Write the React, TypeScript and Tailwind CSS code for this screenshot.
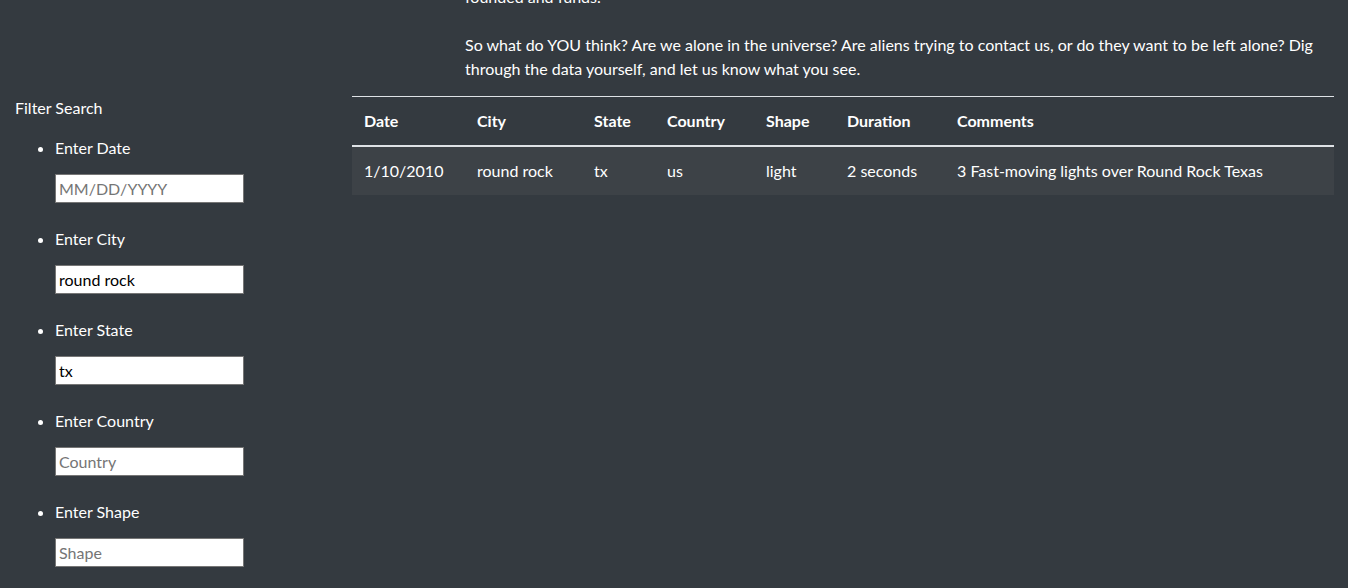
const filters = [
  { label: "Enter Date", placeholder: "MM/DD/YYYY", value: "" },
  { label: "Enter City", placeholder: "City", value: "round rock" },
  { label: "Enter State", placeholder: "State", value: "tx" },
  { label: "Enter Country", placeholder: "Country", value: "" },
  { label: "Enter Shape", placeholder: "Shape", value: "" },
];

const columns = [
  { name: "Date", width: "w-[113px]" },
  { name: "City", width: "w-[117px]" },
  { name: "State", width: "w-[73px]" },
  { name: "Country", width: "w-[99px]" },
  { name: "Shape", width: "w-[81px]" },
  { name: "Duration", width: "w-[110px]" },
  { name: "Comments", width: "" },
];

const rows = [
  ["1/10/2010", "round rock", "tx", "us", "light", "2 seconds", "3 Fast-moving lights over Round Rock Texas"],
];

export default function App() {
  return (
    <div
      className="h-[588px] overflow-hidden bg-[#343a40] text-white text-[16px] leading-[24px]"
      style={{ fontFamily: "Lato, 'Noto Sans', sans-serif" }}
    >
      <div className="flex">
        {/* sidebar */}
        <aside className="w-[337px] shrink-0 pl-[15px] pt-[96px]">
          <p>Filter Search</p>
          <ul className="mt-[16px] list-disc pl-[40px]">
            {filters.map((f) => (
              <li key={f.label} className="mb-[24px]">
                <span>{f.label}</span>
                <input
                  type="text"
                  defaultValue={f.value}
                  placeholder={f.placeholder}
                  className="mt-[14px] block h-[29px] w-[189px] border border-[#767676] bg-white px-[3px] text-[16px] text-black placeholder:text-[#757575] outline-none"
                />
              </li>
            ))}
          </ul>
        </aside>

        {/* main */}
        <main className="ml-[15px] w-[982px] shrink-0">
          <div className="-mt-[15px] pl-[113px]">
            <p>founded and funds.</p>
            <p>&nbsp;</p>
            <p>
              So what do YOU think? Are we alone in the universe? Are aliens trying to contact us, or do they want to be left alone? Dig
              <br />
              through the data yourself, and let us know what you see.
            </p>
          </div>
          <div className="mt-[15px] border-t border-[#dee2e6]">
            <table className="w-full border-collapse text-left">
              <thead>
                <tr className="border-b-2 border-[#dee2e6]">
                  {columns.map((c) => (
                    <th key={c.name} className={`${c.width} px-[12px] py-[12px] font-bold`}>
                      {c.name}
                    </th>
                  ))}
                </tr>
              </thead>
              <tbody>
                {rows.map((r, i) => (
                  <tr key={i} className="bg-[#3d4247]">
                    {r.map((cell, j) => (
                      <td key={j} className="px-[12px] py-[12px]">
                        {cell}
                      </td>
                    ))}
                  </tr>
                ))}
              </tbody>
            </table>
          </div>
        </main>
      </div>
    </div>
  );
}
